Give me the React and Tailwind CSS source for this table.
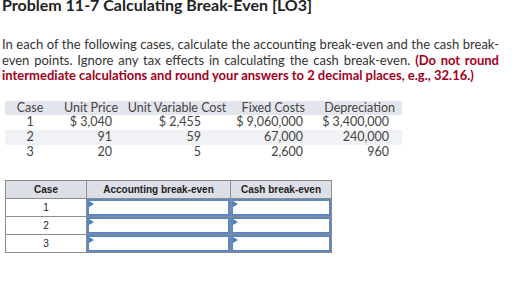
import React from 'react';

const CASES = [
  { id: 1, price: '$ 3,040', variable: '$ 2,455', fixed: '$ 9,060,000', dep: '$ 3,400,000' },
  { id: 2, price: '91', variable: '59', fixed: '67,000', dep: '240,000' },
  { id: 3, price: '20', variable: '5', fixed: '2,600', dep: '960' },
];

const GRID = 'grid grid-cols-[50px_67px_110px_78px_92px]';

function AnswerCell() {
  return (
    <td className="border border-[#8c8c8c] p-0 h-[18px]">
      <div className="relative h-[17px] border-2 border-[#5b87c2] bg-white">
        <span className="absolute left-0 top-0 w-0 h-0 border-t-[3px] border-b-[3px] border-l-[5px] border-t-transparent border-b-transparent border-l-[#4a7fc4]" />
      </div>
    </td>
  );
}

export default function App() {
  return (
    <div className="w-[517px] h-[296px] overflow-hidden bg-white font-['Lato',sans-serif] text-[#333]">
      {/* Title, cut off at top like the original */}
      <h1 className="mt-[-3px] pl-[2px] text-[16px] leading-[16px] font-bold text-[#222]">
        Problem 11-7 Calculating Break-Even [LO3]
      </h1>

      {/* Instructions */}
      <p className="mt-[24px] pl-[2px] pr-[18px] text-[13px] leading-[15.5px] text-[#333] text-justify">
        In each of the following cases, calculate the accounting break-even and the cash break-even points. Ignore any tax effects in calculating the cash break-even.{' '}
        <span className="font-bold text-[#a3001b]">
          (Do not round intermediate calculations and round your answers to 2 decimal places, e.g., 32.16.)
        </span>
      </p>

      {/* Data table */}
      <div className="mt-[17px] ml-[5px] w-[397px] text-[12.5px] leading-[14px] text-[#444]">
        <div className={`${GRID} bg-[#e4e6ed] h-[14px]`}>
          <div className="text-center">Case</div>
          <div className="text-right pr-[4px]">Unit Price</div>
          <div className="text-center">Unit Variable Cost</div>
          <div className="text-right pr-[5px]">Fixed Costs</div>
          <div className="text-right pr-[7px]">Depreciation</div>
        </div>
        {CASES.map((c) => (
          <div key={c.id} className={`${GRID} h-[15px] items-center ${c.id === 2 ? 'bg-[#f1f2f5]' : ''}`}>
            <div className="text-center">{c.id}</div>
            <div className="text-right pr-[10px]">{c.price}</div>
            <div className="text-right pr-[31px]">{c.variable}</div>
            <div className="text-right pr-[7px]">{c.fixed}</div>
            <div className="text-right pr-[13px]">{c.dep}</div>
          </div>
        ))}
      </div>

      {/* Answer table */}
      <table className="mt-[20px] ml-[5px] border-collapse font-['Liberation_Sans',sans-serif] text-[#222]">
        <thead>
          <tr className="bg-[#dcdfe6] h-[18px]">
            <th className="border border-[#8c8c8c] w-[81px] text-[10px] font-bold">Case</th>
            <th className="border border-[#8c8c8c] w-[144px] text-[10px] font-bold">Accounting break-even</th>
            <th className="border border-[#8c8c8c] w-[101px] text-[10px] font-bold">Cash break-even</th>
          </tr>
        </thead>
        <tbody>
          {CASES.map((c) => (
            <tr key={c.id}>
              <td className="border border-[#8c8c8c] h-[18px] text-center text-[10px]">{c.id}</td>
              <AnswerCell />
              <AnswerCell />
            </tr>
          ))}
        </tbody>
      </table>
    </div>
  );
}
